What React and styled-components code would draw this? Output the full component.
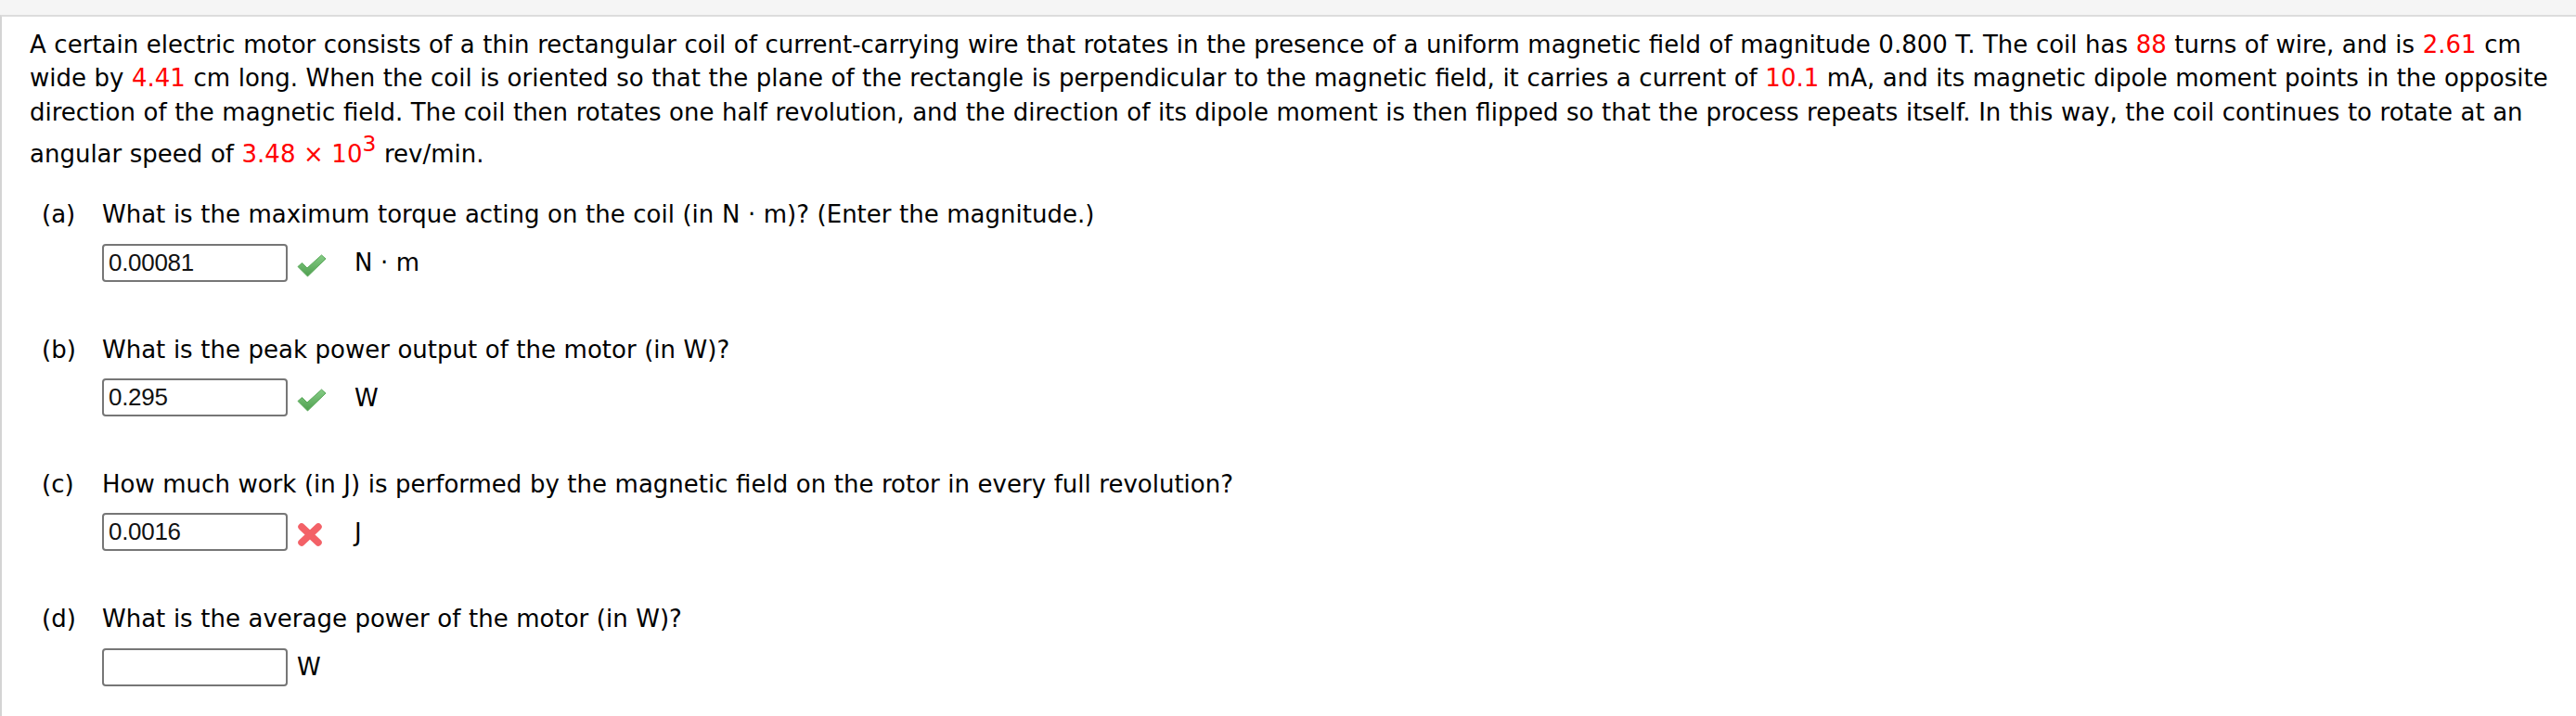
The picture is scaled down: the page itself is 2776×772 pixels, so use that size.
import React from 'react'
import styled, { createGlobalStyle } from 'styled-components'

const GlobalStyle = createGlobalStyle`
  html, body {
    margin: 0;
    padding: 0;
    background: #fff;
  }
`

const TopBar = styled.div`
  height: 16px;
  background: #f5f5f5;
`

const Panel = styled.div`
  border-top: 2px solid #dcdcdc;
  border-left: 2px solid #d4d4d4;
  padding: 12px 16px 40px 30px;
  font: 26px/1.4 "DejaVu Sans", Verdana, sans-serif;
  word-spacing: 0.3px;
  color: #000;
`

const Intro = styled.p`
  margin: 0;
`

const Red = styled.span`
  color: #ff0000;
`

const Sup = styled.sup`
  font-size: 0.9em;
  vertical-align: 0.5em;
`

const Part = styled.div`
  margin-top: ${props => props.first ? '29px' : '55px'};
`

const Question = styled.div`
  display: flex;
  padding-left: 13px;
`

const Letter = styled.span`
  width: 65px;
  flex: none;
`

const AnswerRow = styled.div`
  display: flex;
  align-items: center;
  margin-top: 13px;
  margin-left: 78px;
  height: 41px;
`

const Input = styled.div`
  box-sizing: border-box;
  width: 200px;
  height: 41px;
  border: 2px solid #767676;
  border-radius: 4px;
  padding: 0 5px;
  display: flex;
  align-items: center;
  font: 26px "Liberation Sans", Arial, sans-serif;
  letter-spacing: -0.3px;
  color: #111;
`

const IconSlot = styled.span`
  width: 32px;
  margin-left: 10px;
  display: flex;
  align-items: center;
  padding-top: 6px;
`

const Unit = styled.span`
  margin-left: ${props => props.tight ? '10px' : '30px'};
  line-height: 1;
`

const CheckIcon = () => (
  <svg width="32" height="25" viewBox="0 0 32 25">
    <defs>
      <linearGradient id="chk" x1="0" y1="0" x2="0" y2="1">
        <stop offset="0" stopColor="#86cc86" />
        <stop offset="1" stopColor="#4f9f4f" />
      </linearGradient>
    </defs>
    <path
      d="M1 13.5 L5.5 9.5 L11 15 L26.5 1 L31 5 L11.5 24 Z"
      fill="url(#chk)"
      stroke="#5aa95a"
      strokeWidth="1"
      strokeLinejoin="round"
    />
  </svg>
)

const CrossIcon = () => (
  <svg width="28" height="27" viewBox="0 0 28 27">
    <g stroke="#f2545b" strokeWidth="7.5" strokeLinecap="round" opacity="0.92">
      <line x1="5" y1="5" x2="23" y2="22" />
      <line x1="23" y1="5" x2="5" y2="22" />
    </g>
  </svg>
)

const parts = [
  {
    letter: '(a)',
    text: 'What is the maximum torque acting on the coil (in N · m)? (Enter the magnitude.)',
    value: '0.00081',
    status: 'ok',
    unit: 'N · m',
  },
  {
    letter: '(b)',
    text: 'What is the peak power output of the motor (in W)?',
    value: '0.295',
    status: 'ok',
    unit: 'W',
  },
  {
    letter: '(c)',
    text: 'How much work (in J) is performed by the magnetic field on the rotor in every full revolution?',
    value: '0.0016',
    status: 'bad',
    unit: 'J',
  },
  {
    letter: '(d)',
    text: 'What is the average power of the motor (in W)?',
    value: '',
    status: null,
    unit: 'W',
  },
]

const App = () => (
  <>
    <GlobalStyle />
    <TopBar />
    <Panel>
      <Intro>
        A certain electric motor consists of a thin rectangular coil of current-carrying wire that
        rotates in the presence of a uniform magnetic field of magnitude 0.800 T. The coil has{' '}
        <Red>88</Red> turns of wire, and is <Red>2.61</Red> cm wide by <Red>4.41</Red> cm long. When
        the coil is oriented so that the plane of the rectangle is perpendicular to the magnetic
        field, it carries a current of <Red>10.1</Red> mA, and its magnetic dipole moment points in
        the opposite direction of the magnetic field. The coil then rotates one half revolution, and
        the direction of its dipole moment is then flipped so that the process repeats itself. In
        this way, the coil continues to rotate at an angular speed of{' '}
        <Red>
          3.48 × 10<Sup>3</Sup>
        </Red>{' '}
        rev/min.
      </Intro>
      {parts.map((p, i) => (
        <Part key={p.letter} first={i === 0}>
          <Question>
            <Letter>{p.letter}</Letter>
            <span>{p.text}</span>
          </Question>
          <AnswerRow>
            <Input>{p.value}</Input>
            {p.status && (
              <IconSlot>{p.status === 'ok' ? <CheckIcon /> : <CrossIcon />}</IconSlot>
            )}
            <Unit tight={!p.status}>{p.unit}</Unit>
          </AnswerRow>
        </Part>
      ))}
    </Panel>
  </>
)

export default App
